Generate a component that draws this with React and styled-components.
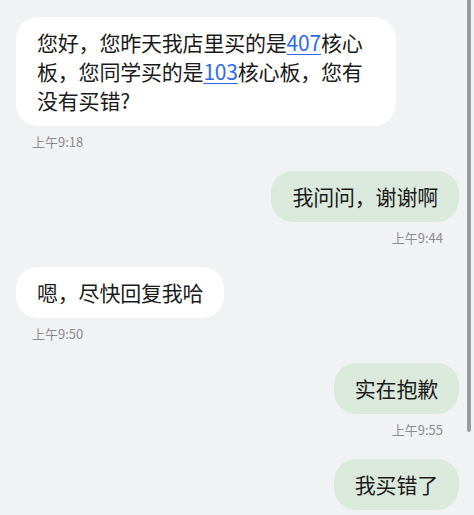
import React from "react";
import styled, { createGlobalStyle } from "styled-components";

const Global = createGlobalStyle`
  html, body { margin: 0; padding: 0; background: #f1f2f4; }
  body { font-family: "Noto Sans CJK SC", "Noto Sans", sans-serif; }
`;

const Screen = styled.div`
  position: relative;
  width: 474px;
  height: 515px;
  overflow: hidden;
  background: #f1f2f4;
`;

const Thread = styled.div`
  display: flex;
  flex-direction: column;
  padding: 17px 15px 0 16px;
`;

const Message = styled.div`
  display: flex;
  flex-direction: column;
  align-items: ${(p) => (p.$mine ? "flex-end" : "flex-start")};
  margin-bottom: 20px;
`;

const Bubble = styled.div`
  max-width: 380px;
  box-sizing: border-box;
  padding: 11px 21px;
  border-radius: 22px;
  background: ${(p) => (p.$mine ? "#dbe9dc" : "#ffffff")};
  color: #1b1b1b;
  font-size: 21px;
  line-height: 29px;
  letter-spacing: -0.2px;
`;

const Num = styled.span`
  color: #2f6ae6;
  text-decoration: underline;
  text-decoration-thickness: 1px;
  text-underline-offset: 3px;
`;

const Time = styled.div`
  margin-top: 7px;
  padding: 0 16px;
  font-size: 13px;
  line-height: 18px;
  color: #8c8c8c;
`;

const ScrollThumb = styled.div`
  position: absolute;
  top: 0;
  right: 3px;
  width: 4px;
  height: 432px;
  border-radius: 0 0 2px 2px;
  background: #9b9b9b;
`;

const messages = [
  {
    mine: false,
    time: "上午9:18",
    body: (
      <>
        您好，您昨天我店里买的是<Num>407</Num>核心板，您同学买的是<Num>103</Num>核心板，您有没有买错?
      </>
    ),
  },
  { mine: true, time: "上午9:44", body: "我问问，谢谢啊" },
  { mine: false, time: "上午9:50", body: "嗯，尽快回复我哈" },
  { mine: true, time: "上午9:55", body: "实在抱歉" },
  { mine: true, time: "", body: "我买错了" },
];

export default function App() {
  return (
    <>
      <Global />
      <Screen>
        <Thread>
          {messages.map((m, i) => (
            <Message key={i} $mine={m.mine}>
              <Bubble $mine={m.mine}>{m.body}</Bubble>
              {m.time && <Time>{m.time}</Time>}
            </Message>
          ))}
        </Thread>
        <ScrollThumb />
      </Screen>
    </>
  );
}
